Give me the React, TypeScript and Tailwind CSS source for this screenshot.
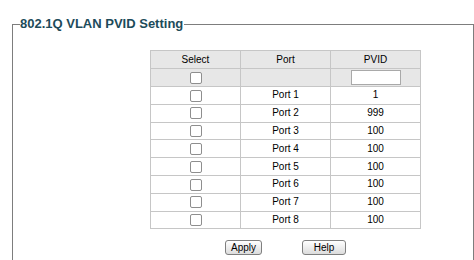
const ports = [
  { name: 'Port 1', pvid: '1' },
  { name: 'Port 2', pvid: '999' },
  { name: 'Port 3', pvid: '100' },
  { name: 'Port 4', pvid: '100' },
  { name: 'Port 5', pvid: '100' },
  { name: 'Port 6', pvid: '100' },
  { name: 'Port 7', pvid: '100' },
  { name: 'Port 8', pvid: '100' },
];

function Check() {
  return <span className="inline-block h-[12px] w-[12px] rounded-[2px] border border-[#8e8e8e] bg-white align-middle" />;
}

const cell = 'border border-[#c6c6c6] p-0 text-center align-middle';

export default function App() {
  return (
    <div className="h-[260px] w-[474px] overflow-hidden bg-white font-['Liberation_Sans',Arial,sans-serif] text-black">
      <fieldset className="ml-3 mt-4 h-[400px] w-[462px] border border-[#7d7d7d] pl-[7px]">
        <legend className="pr-[1px] text-[13px] font-bold leading-4 text-[#1d4b5a]">802.1Q VLAN PVID Setting</legend>

        <div className="ml-[130px] mt-[18px] w-[271px]">
          <table className="w-[271px] table-fixed border-collapse text-[10px] leading-3">
            <thead>
              <tr className="h-[18px] bg-[#e7e7e7]">
                <th className={`${cell} w-[90px] font-normal`}>Select</th>
                <th className={`${cell} w-[90px] font-normal`}>Port</th>
                <th className={`${cell} font-normal`}>PVID</th>
              </tr>
            </thead>
            <tbody>
              <tr className="h-[18px] bg-[#e7e7e7]">
                <td className={cell}><Check /></td>
                <td className={cell}></td>
                <td className={cell}>
                  <input type="text" className="block mx-auto h-[15px] w-[50px] border border-[#a9a9a9] bg-white" />
                </td>
              </tr>
              {ports.map((p) => (
                <tr key={p.name} className="h-[17.8px] bg-white">
                  <td className={cell}><Check /></td>
                  <td className={cell}>{p.name}</td>
                  <td className={cell}>{p.pvid}</td>
                </tr>
              ))}
            </tbody>
          </table>

          <div className="mt-[11px] flex justify-center gap-[40px]">
            <button className="h-[15px] w-[37px] rounded-[3px] border border-[#7f7f7f] bg-gradient-to-b from-white to-[#dcdcdc] text-[10px] leading-3">Apply</button>
            <button className="h-[15px] w-[44px] rounded-[3px] border border-[#7f7f7f] bg-gradient-to-b from-white to-[#dcdcdc] text-[10px] leading-3">Help</button>
          </div>
        </div>
      </fieldset>
    </div>
  );
}
